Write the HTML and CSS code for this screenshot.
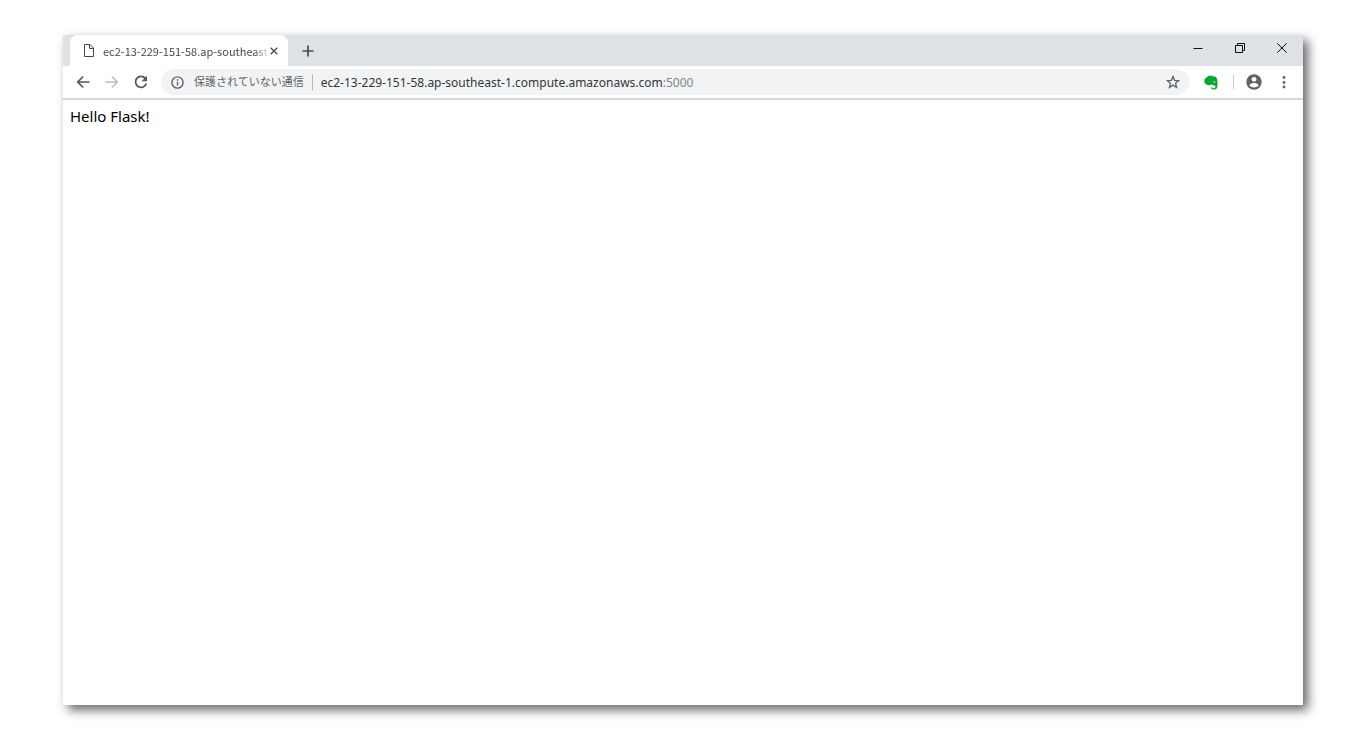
FILE: index.html
```html
<!DOCTYPE html>
<html lang="ja">
<head>
<meta charset="UTF-8">
<meta name="viewport" content="width=device-width, initial-scale=1.0">
<title>ec2-13-229-151-58.ap-southeast-1.compute.amazonaws.com:5000</title>
<link rel="stylesheet" href="styles.css">
</head>
<body>

<div class="window">
    <header class="tabs">
        <div class="tab">
            <svg class="page-icon" width="10" height="13" viewBox="0 0 10 13"><path d="M.5.5h5.500l3.500 3.500v8.500h-9zM5.500.5v4h4" fill="none" stroke="#45494d"/></svg>
            <span class="tab-title">ec2-13-229-151-58.ap-southeast</span>
            <button class="icon tab-close" aria-label="タブを閉じる">
                <svg width="8" height="8" viewBox="0 0 8 8"><path d="M.7.7l6.600 6.600M7.300.7L.7 7.300" stroke="#45494d" stroke-width="1.300"/></svg>
            </button>
        </div>
        <button class="icon new-tab" aria-label="新しいタブ">
            <svg width="12" height="12" viewBox="0 0 12 12"><path d="M6 .5v11M.5 6h11" stroke="#45494d" stroke-width="1.700"/></svg>
        </button>
        <div class="window-buttons">
            <button class="icon" aria-label="最小化">
                <svg width="10" height="10" viewBox="0 0 10 10"><path d="M.5 5.500h9" stroke="#111"/></svg>
            </button>
            <button class="icon" aria-label="元に戻す">
                <svg width="10" height="10" viewBox="0 0 10 10"><path d="M.5 2.500h7v7h-7zM2.500 2.500v-2h7v7h-2" fill="none" stroke="#111"/></svg>
            </button>
            <button class="icon" aria-label="閉じる">
                <svg width="10" height="10" viewBox="0 0 10 10"><path d="M.3.3l9.400 9.400M9.700.3L.3 9.700" stroke="#111"/></svg>
            </button>
        </div>
    </header>

    <nav class="toolbar">
        <button class="icon nav" aria-label="戻る">
            <svg width="14" height="14" viewBox="0 0 14 14"><path d="M13.500 7H2M7.200 1.500L1.700 7l5.500 5.500" fill="none" stroke="#54585c" stroke-width="1.700"/></svg>
        </button>
        <button class="icon nav" aria-label="進む" disabled>
            <svg width="14" height="14" viewBox="0 0 14 14"><path d="M.5 7H12M6.800 1.500L12.300 7l-5.500 5.500" fill="none" stroke="#babcbe" stroke-width="1.600"/></svg>
        </button>
        <button class="icon nav" aria-label="再読み込み">
            <svg width="14" height="14" viewBox="0 0 14 14"><path d="M11.300 3.400A5.500 5.500 0 1 0 12.300 8.500" fill="none" stroke="#54585c" stroke-width="1.800"/><path d="M13 .8v5.500H7.500z" fill="#54585c"/></svg>
        </button>
        <div class="address">
            <svg width="13" height="13" viewBox="0 0 13 13"><circle cx="6.500" cy="6.500" r="5.600" fill="none" stroke="#5f6368" stroke-width="1.400"/><path d="M6.500 5.800v3.800M6.500 3.300v1.400" stroke="#5f6368" stroke-width="1.400"/></svg>
            <label class="security" for="url">保護されていない通信</label>
            <input class="url" id="url" type="text" spellcheck="false" value="ec2-13-229-151-58.ap-southeast-1.compute.amazonaws.com">
            <span class="port">:5000</span>
            <button class="icon star" aria-label="ブックマーク">
                <svg width="14" height="14" viewBox="0 0 14 14"><path d="M7 1.500l1.600 3.800 4.100.3-3.100 2.700 1 4L7 10.100l-3.600 2.200 1-4-3.100-2.700 4.100-.3z" fill="none" stroke="#5f6368" stroke-width="1.300"/></svg>
            </button>
        </div>
        <button class="icon clip" aria-label="Evernote">
            <svg width="14" height="15" viewBox="0 0 14 15"><path d="M4.200.9C5.500.1 7.600.2 8.400 1.300c1.300.1 2.800.3 3.700.9.900.6 1.400 3.200 1.400 6.300 0 3.200-.6 6-2.500 6H9.200C7.700 14.500 7 13.500 7 12.600l1.300-.4c0 .7.500 1.100 1.100 1.100h.8c.9 0 1.200-.8 1.200-1.500 0-1-.8-1.600-1.800-1.600-1.300 0-2-.4-2.300-1.200C7 9.700 6.400 10.300 5.600 10.200 3 10 1.300 9.500.8 8 .4 6.500.3 5 .5 4.200z" fill="#00a82d"/><path d="M9.200 7.300q1-2 2.500.1zM8.300 11h2.200v1.200H8.300z" fill="#fff"/></svg>
        </button>
        <span class="divider"></span>
        <button class="icon profile" aria-label="プロフィール">
            <svg width="16" height="16" viewBox="0 0 16 16"><circle cx="8" cy="8" r="7.700" fill="#5f6368"/><circle cx="8" cy="5.300" r="2.400" fill="#fff"/><path d="M3.300 11.200C4 9.600 6.500 9 8 9s4 .6 4.700 2.200C11.500 12.800 9.800 13.400 8 13.400s-3.500-.6-4.700-2.200z" fill="#fff"/></svg>
        </button>
        <button class="icon more" aria-label="メニュー">
            <svg width="4" height="14" viewBox="0 0 4 14"><g fill="#5f6368"><circle cx="2" cy="2.500" r="1.400"/><circle cx="2" cy="7.500" r="1.400"/><circle cx="2" cy="12" r="1.400"/></g></svg>
        </button>
    </nav>

    <main class="page">Hello Flask!</main>
</div>

</body>
</html>
```
FILE: styles.css
```css
* {
    box-sizing: border-box;
}
body {
    display: flex;
    min-height: 100vh;
    margin: 0;
    padding: 35px 63px 33px;
    background-color: #fff;
    font-family: "Noto Sans", "Noto Sans CJK JP", sans-serif;
}
.window {
    flex: 1;
    display: flex;
    flex-direction: column;
    min-width: 0;
    background-color: #fff;
    box-shadow: 5px 5px 10px rgba(0, 0, 0, 0.6);
}
svg {
    display: block;
    flex: none;
}
.icon {
    display: flex;
    align-items: center;
    justify-content: center;
    flex: none;
    padding: 0;
    border: none;
    background: none;
}

/* tab strip */
.tabs {
    display: flex;
    height: 31px;
    padding-left: 7px;
    background-color: #dee1e6;
}
.tab {
    display: flex;
    align-items: center;
    width: 218px;
    padding: 0 10px 0 14px;
    border-radius: 8px 8px 0 0;
    background-color: #fff;
}
.tab-title {
    flex: 1;
    margin-left: 9px;
    white-space: nowrap;
    font-family: "Noto Sans CJK JP", sans-serif;
    font-size: 11px;
    line-height: 16px;
    color: #45494d;
    -webkit-mask-image: linear-gradient(to left, transparent, #000 16px);
    mask-image: linear-gradient(to left, transparent, #000 16px);
}
.tab-close {
    width: 8px;
}
.new-tab {
    width: 40px;
}
.window-buttons {
    display: flex;
    margin-left: auto;
    height: 26px;
}
.window-buttons .icon {
    width: 42px;
}

/* toolbar */
.toolbar {
    display: flex;
    align-items: center;
    height: 34px;
    padding: 0 8px 0 5px;
    border-bottom: 2px solid #d5d6d8;
}
.nav {
    width: 29px;
    height: 28px;
}
.address {
    flex: 1;
    display: flex;
    align-items: center;
    min-width: 0;
    height: 26px;
    margin-left: 6px;
    padding: 0 9px 0 10px;
    border-radius: 13px;
    background-color: #f1f3f4;
    font-size: 12px;
}
.security {
    margin-left: 10px;
    padding-right: 8px;
    border-right: 1px solid #b5b7ba;
    font-size: 11px;
    line-height: 16px;
    color: #5f6368;
    white-space: nowrap;
}
.url {
    field-sizing: content;
    margin-left: 8px;
    padding: 0;
    border: none;
    outline: none;
    background: none;
    font: inherit;
    color: #34373a;
}
.port {
    color: #80868b;
}
.star {
    margin-left: auto;
}
.clip {
    width: 30px;
    margin-left: 7px;
}
.divider {
    width: 1px;
    height: 14px;
    margin-left: 7px;
    background-color: #c8cacd;
}
.profile {
    width: 30px;
    margin-left: 5px;
}
.more {
    width: 22px;
    margin-left: 4px;
}

/* page */
.page {
    flex: 1;
    padding: 4px 7px;
    font-size: 15px;
    line-height: 24px;
    color: #000;
}
```
